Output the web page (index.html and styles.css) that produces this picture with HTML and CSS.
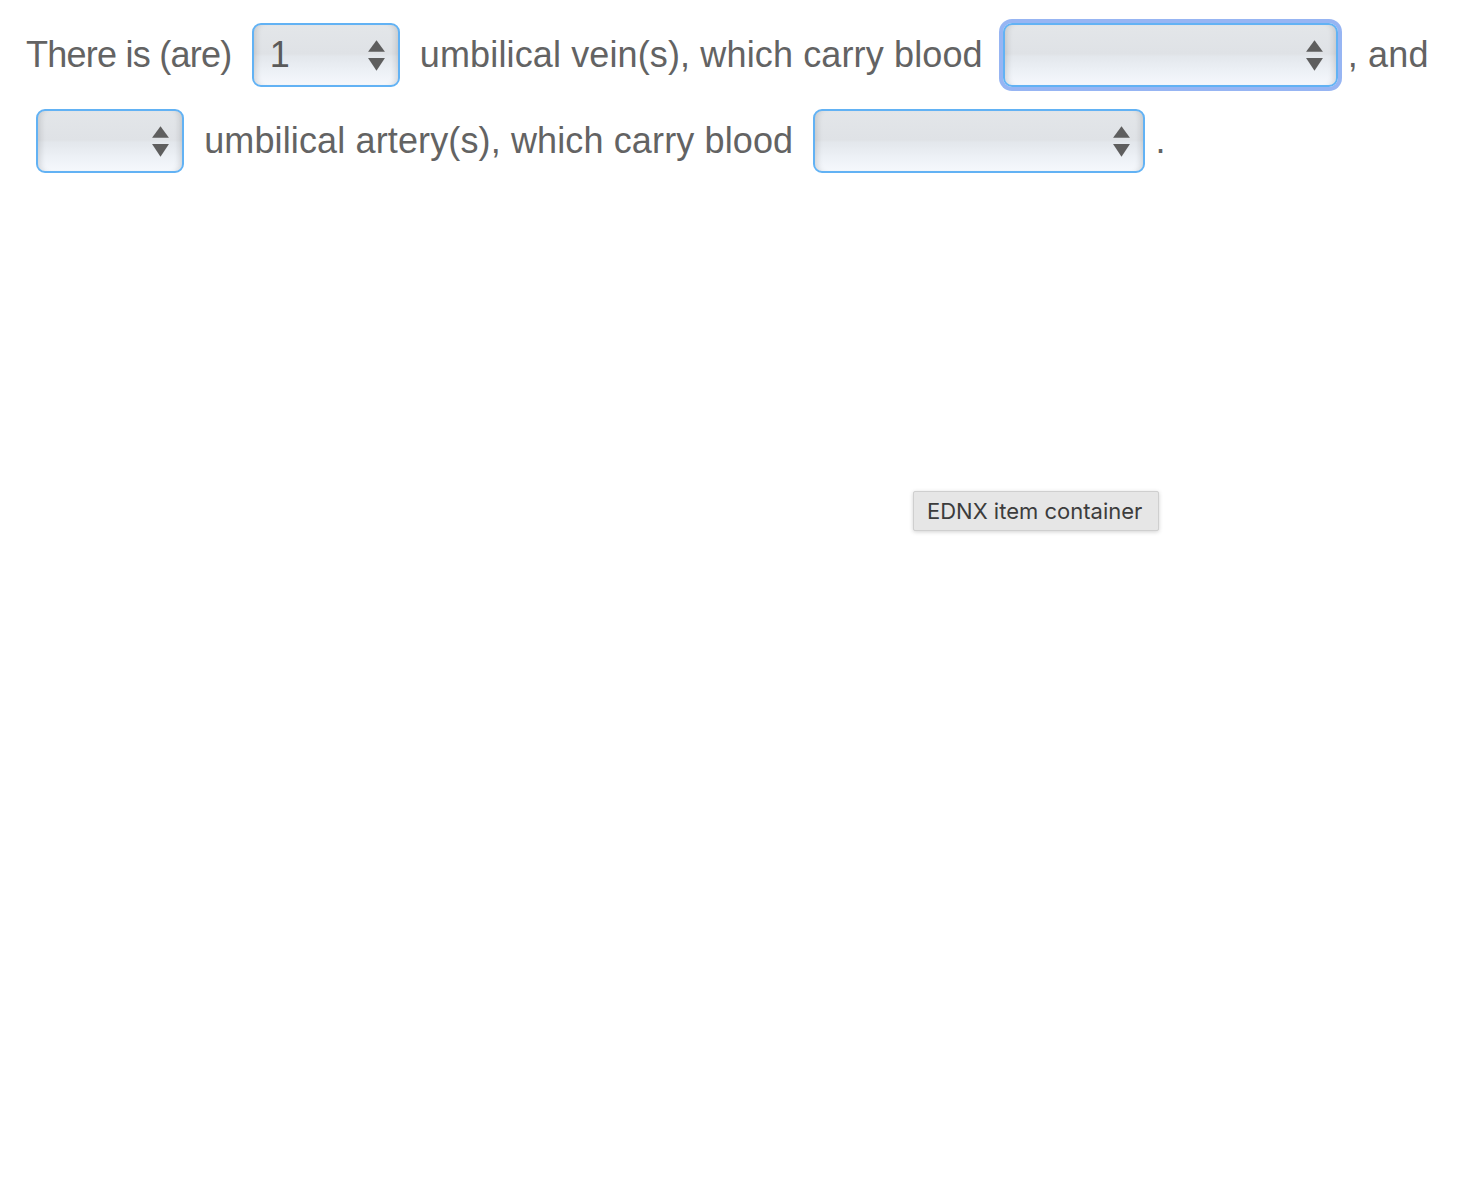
FILE: index.html
```html
<!DOCTYPE html>
<html>
<head>
<meta charset="utf-8">
<link rel="stylesheet" href="styles.css">
</head>
<body>
<div class="item">
<p class="question"><span class="lead">There is (are)</span> <span class="select small"><span class="inner"><span class="value">1</span><svg class="arrows" viewBox="0 0 18 32" width="19" height="34"><path d="M9 1 L17 12 L1 12 Z"/><path d="M1 18 L17 18 L9 30 Z"/></svg></span></span> umbilical vein(s), which carry blood <span class="select large focused"><span class="inner"><span class="value"></span><svg class="arrows" viewBox="0 0 18 32" width="19" height="34"><path d="M9 1 L17 12 L1 12 Z"/><path d="M1 18 L17 18 L9 30 Z"/></svg></span></span>, and <span class="select small"><span class="inner"><span class="value"></span><svg class="arrows" viewBox="0 0 18 32" width="19" height="34"><path d="M9 1 L17 12 L1 12 Z"/><path d="M1 18 L17 18 L9 30 Z"/></svg></span></span> umbilical artery(s), which carry blood <span class="select large2"><span class="inner"><span class="value"></span><svg class="arrows" viewBox="0 0 18 32" width="19" height="34"><path d="M9 1 L17 12 L1 12 Z"/><path d="M1 18 L17 18 L9 30 Z"/></svg></span></span>.</p>
<div class="tooltip">EDNX item container</div>
</div>
</body>
</html>
```

FILE: styles.css
```css
html, body {
  margin: 0;
  padding: 0;
  background: #ffffff;
}

.item {
  position: relative;
  height: 1184px;
  padding: 12px 26px 0 26px;
  box-sizing: border-box;
}

.question {
  margin: 0;
  font-family: "Liberation Sans", Arial, sans-serif;
  font-size: 36px;
  line-height: 86px;
  letter-spacing: 0.13px;
  color: #636363;
}

.lead {
  letter-spacing: -0.75px;
}

.select {
  display: inline-block;
  box-sizing: border-box;
  height: 64px;
  margin: 0 10px;
  vertical-align: -20px;
  overflow: hidden;
  letter-spacing: 0;
  border: 2px solid #62b2f4;
  border-radius: 9px;
  background: linear-gradient(to bottom, #e3e6e9 0%, #dfe2e6 48%, #e3e7ec 52%, #eef2f7 80%, #f5f8fc 100%);
  box-shadow: inset 7px 0 6px -5px rgba(0, 0, 0, 0.14), inset -7px 0 6px -5px rgba(0, 0, 0, 0.14);
}

.select.small { width: 148px; }
.select.large { width: 335px; }
.select.large2 { width: 332px; }

.select.focused {
  box-shadow: 0 0 0 4px #97b5f3, inset 7px 0 6px -5px rgba(0, 0, 0, 0.14), inset -7px 0 6px -5px rgba(0, 0, 0, 0.14);
}

.inner {
  display: flex;
  align-items: center;
  justify-content: space-between;
  height: 100%;
  padding: 0 12px 0 16px;
  line-height: 60px;
  overflow: hidden;
}

.value {
  color: #5a5a5a;
  font-size: 36px;
}

.arrows {
  flex: none;
  fill: #5e5e5e;
  margin-top: 1px;
}

.tooltip {
  position: absolute;
  left: 913px;
  top: 491px;
  box-sizing: border-box;
  width: 246px;
  height: 40px;
  padding: 0 13px;
  background: #e6e6e6;
  border: 1px solid #cfcfcf;
  border-radius: 2px;
  box-shadow: 0 1px 4px rgba(0, 0, 0, 0.18);
  font-family: Inter, "Noto Sans", sans-serif;
  font-size: 22px;
  line-height: 38px;
  color: #3c3c3c;
  white-space: nowrap;
}
```
